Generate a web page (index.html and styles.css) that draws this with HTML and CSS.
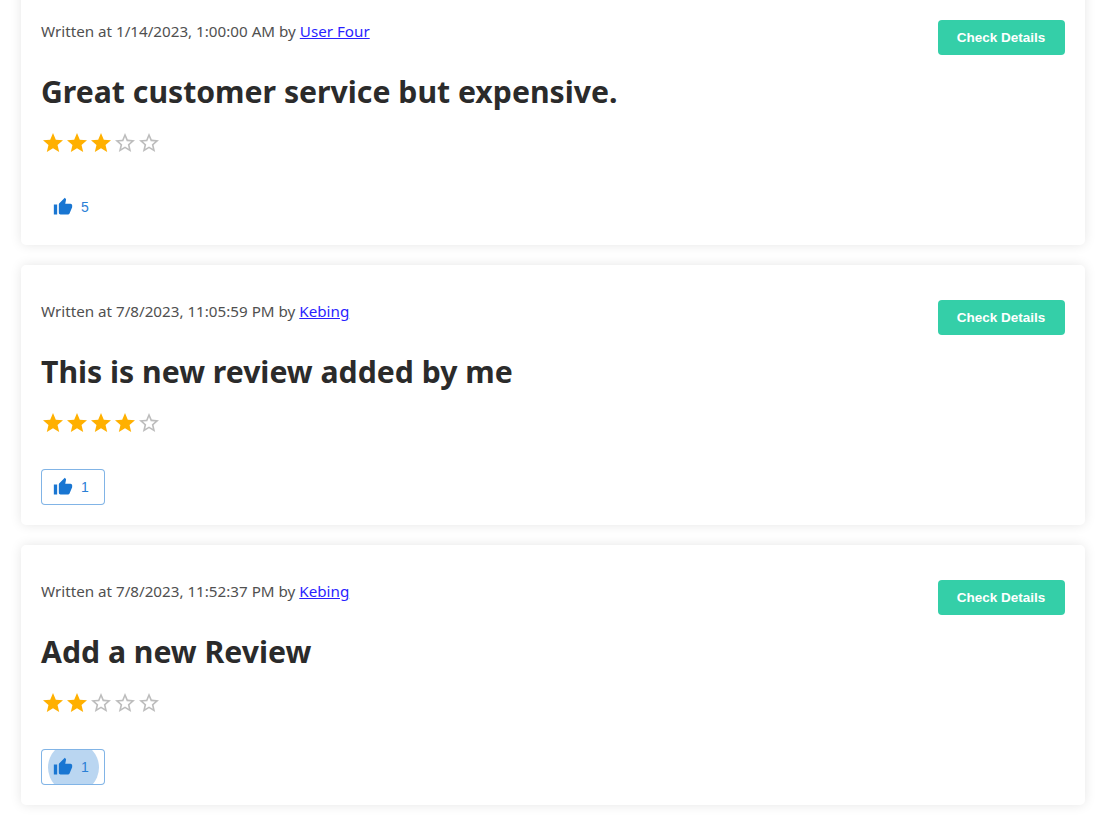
FILE: index.html
```html
<!DOCTYPE html>
<html lang="en">
<head>
<meta charset="utf-8">
<title>Reviews</title>
<link rel="stylesheet" href="styles.css">
</head>
<body>
<svg class="defs" width="0" height="0" aria-hidden="true">
  <defs>
    <symbol id="star-full" viewBox="0 0 24 24"><path d="M12 17.27 18.18 21l-1.64-7.03L22 9.24l-7.19-.61L12 2 9.19 8.63 2 9.24l5.46 4.73L5.82 21z"/></symbol>
    <symbol id="star-empty" viewBox="0 0 24 24"><path d="M22 9.24l-7.19-.62L12 2 9.19 8.63 2 9.24l5.46 4.73L5.82 21 12 17.27 18.18 21l-1.63-7.03L22 9.24zM12 15.4l-3.76 2.27 1-4.28-3.32-2.88 4.38-.38L12 6.1l1.71 4.04 4.38.38-3.32 2.88 1 4.28L12 15.4z"/></symbol>
    <symbol id="thumb" viewBox="0 0 24 24"><path d="M1 21h4V9H1v12zm22-11c0-1.1-.9-2-2-2h-6.31l.95-4.57.03-.32c0-.41-.17-.79-.44-1.06L14.17 1 7.59 7.59C7.22 7.95 7 8.45 7 9v10c0 1.1.9 2 2 2h9c.83 0 1.54-.5 1.84-1.22l3.02-7.05c.09-.23.14-.47.14-.73v-2z"/></symbol>
  </defs>
</svg>
<main class="list">
  <article class="card">
    <div class="meta">
      <p class="written">Written at 1/14/2023, 1:00:00 AM by <a href="#">User Four</a></p>
      <button class="details">Check Details</button>
    </div>
    <h2 class="title">Great customer service but expensive.</h2>
    <div class="stars">
      <svg class="star on"><use href="#star-full"/></svg><svg class="star on"><use href="#star-full"/></svg><svg class="star on"><use href="#star-full"/></svg><svg class="star off"><use href="#star-empty"/></svg><svg class="star off"><use href="#star-empty"/></svg>
    </div>
    <button class="like plain"><svg class="thumb"><use href="#thumb"/></svg><span>5</span></button>
  </article>
  <article class="card">
    <div class="meta">
      <p class="written">Written at 7/8/2023, 11:05:59 PM by <a href="#">Kebing</a></p>
      <button class="details">Check Details</button>
    </div>
    <h2 class="title">This is new review added by me</h2>
    <div class="stars">
      <svg class="star on"><use href="#star-full"/></svg><svg class="star on"><use href="#star-full"/></svg><svg class="star on"><use href="#star-full"/></svg><svg class="star on"><use href="#star-full"/></svg><svg class="star off"><use href="#star-empty"/></svg>
    </div>
    <button class="like"><svg class="thumb"><use href="#thumb"/></svg><span>1</span></button>
  </article>
  <article class="card">
    <div class="meta">
      <p class="written">Written at 7/8/2023, 11:52:37 PM by <a href="#">Kebing</a></p>
      <button class="details">Check Details</button>
    </div>
    <h2 class="title">Add a new Review</h2>
    <div class="stars">
      <svg class="star on"><use href="#star-full"/></svg><svg class="star on"><use href="#star-full"/></svg><svg class="star off"><use href="#star-empty"/></svg><svg class="star off"><use href="#star-empty"/></svg><svg class="star off"><use href="#star-empty"/></svg>
    </div>
    <button class="like ripple"><svg class="thumb"><use href="#thumb"/></svg><span>1</span></button>
  </article>
</main>
</body>
</html>
```
FILE: styles.css
```css
html, body {
  margin: 0;
  height: 828px;
  overflow: hidden;
  background: #fff;
}
.defs {
  position: absolute;
}
.list {
  display: flex;
  flex-direction: column;
  gap: 20px;
  margin: -15px 14px 0 21px;
  font-family: "Noto Sans", "Open Sans", sans-serif;
}
.card {
  height: 260px;
  box-sizing: border-box;
  padding: 35px 20px 20px;
  background: #fff;
  border-radius: 5px;
  box-shadow: 0 0 12px rgba(0, 0, 0, 0.1);
  display: flex;
  flex-direction: column;
  align-items: flex-start;
}
.meta {
  align-self: stretch;
  display: flex;
  justify-content: space-between;
  align-items: flex-start;
  height: 35px;
}
.written {
  margin: 0;
  font-size: 15.2px;
  line-height: 22px;
  color: #505050;
}
.written a {
  color: #2a1fff;
}
.details {
  width: 127px;
  height: 35px;
  border: none;
  border-radius: 4px;
  background: #34cfa8;
  color: #fff;
  font: 700 13.5px "Liberation Sans", Arial, sans-serif;
  padding: 0 1px 0 0;
}
.title {
  margin: 17px 0 0;
  font-size: 30.2px;
  line-height: 40px;
  font-weight: 700;
  color: #2b2b2b;
}
.stars {
  display: flex;
  margin-top: 19px;
  height: 24px;
}
.star {
  width: 24px;
  height: 24px;
}
.star.on {
  fill: #ffb000;
}
.star.off {
  fill: #bdbdbd;
}
.like {
  position: relative;
  margin-top: 34px;
  width: 64px;
  height: 36px;
  box-sizing: border-box;
  border: 1px solid rgba(25, 118, 210, 0.55);
  border-radius: 4px;
  background: #fff;
  color: #2a80d6;
  display: flex;
  align-items: center;
  gap: 8px;
  padding: 0 0 0 11px;
  font: 400 14px "Liberation Sans", Arial, sans-serif;
  overflow: hidden;
}
.like.plain {
  border-color: transparent;
}
.like span {
  position: relative;
}
.thumb {
  position: relative;
  width: 20px;
  height: 20px;
  fill: #1976d2;
}
.ripple::before {
  content: "";
  position: absolute;
  left: 6px;
  top: -8px;
  width: 51px;
  height: 51px;
  border-radius: 50%;
  background: rgba(25, 118, 210, 0.3);
}
```
